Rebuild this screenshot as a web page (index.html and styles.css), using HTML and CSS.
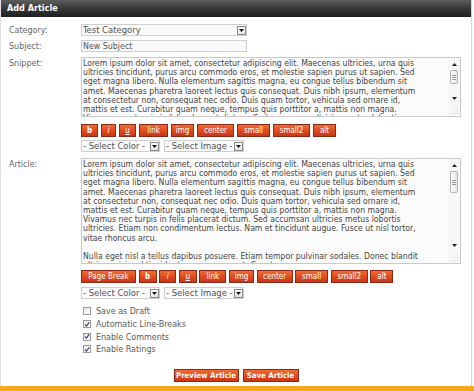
FILE: index.html
```html
<!DOCTYPE html>
<html>
<head>
<meta charset="utf-8">
<title>Add Article</title>
<link rel="stylesheet" href="styles.css">
</head>
<body>
<div class="panel">
  <div class="head">Add Article</div>
  <form class="form">
    <div class="row r-cat">
      <label class="lbl">Category:</label>
      <span class="sel sel-wide"><select><option>Test Category</option></select><span class="arrow"><svg width="5" height="3" viewBox="0 0 5 3"><path d="M0 0H5L2.5 3Z" fill="#111"/></svg></span></span>
    </div>
    <div class="row r-subj">
      <label class="lbl">Subject:</label>
      <input class="txt" type="text" value="New Subject">
    </div>
    <div class="row r-snip">
      <label class="lbl lbl-top">Snippet:</label>
      <div class="tbox tbox-snip">
        <textarea class="ta">Lorem ipsum dolor sit amet, consectetur adipiscing elit. Maecenas ultricies, urna quis
ultricies tincidunt, purus arcu commodo eros, et molestie sapien purus ut sapien. Sed
eget magna libero. Nulla elementum sagittis magna, eu congue tellus bibendum sit
amet. Maecenas pharetra laoreet lectus quis consequat. Duis nibh ipsum, elementum
at consectetur non, consequat nec odio. Duis quam tortor, vehicula sed ornare id,
mattis et est. Curabitur quam neque, tempus quis porttitor a, mattis non magna.
Vivamus nec turpis in felis placerat dictum. Sed accumsan ultricies metus lobortis</textarea>
        <div class="sb">
          <span class="sb-btn"><svg width="5" height="3" viewBox="0 0 5 3"><path d="M2.5 0L5 3H0Z" fill="#222"/></svg></span>
          <span class="sb-thumb thumb-snip"><i></i><i></i><i></i></span>
          <span class="sb-track"></span>
          <span class="sb-btn"><svg width="5" height="3" viewBox="0 0 5 3"><path d="M0 0H5L2.5 3Z" fill="#222"/></svg></span>
          <span class="sb-corner"><svg width="8" height="8" viewBox="0 0 8 8"><g fill="#c4c4c4"><rect x="6" y="0" width="1" height="1"/><rect x="6" y="3" width="1" height="1"/><rect x="3" y="3" width="1" height="1"/><rect x="6" y="6" width="1" height="1"/><rect x="3" y="6" width="1" height="1"/><rect x="0" y="6" width="1" height="1"/></g></svg></span>
        </div>
      </div>
    </div>
    <div class="row r-btn1 indent">
      <button type="button" class="btn w17 bb">b</button>
      <button type="button" class="btn w15 bi">i</button>
      <button type="button" class="btn w17 bu">u</button>
      <button type="button" class="btn w29">link</button>
      <button type="button" class="btn w23">img</button>
      <button type="button" class="btn w37">center</button>
      <button type="button" class="btn w33">small</button>
      <button type="button" class="btn w37">small2</button>
      <button type="button" class="btn w23">alt</button>
    </div>
    <div class="row r-sel1 indent">
      <span class="sel sel-color"><select><option>- Select Color -</option></select><span class="arrow"><svg width="5" height="3" viewBox="0 0 5 3"><path d="M0 0H5L2.5 3Z" fill="#111"/></svg></span></span>
      <span class="sel sel-img"><select><option>- Select Image -</option></select><span class="arrow"><svg width="5" height="3" viewBox="0 0 5 3"><path d="M0 0H5L2.5 3Z" fill="#111"/></svg></span></span>
    </div>
    <div class="row r-art">
      <label class="lbl lbl-top">Article:</label>
      <div class="tbox tbox-art">
        <textarea class="ta">Lorem ipsum dolor sit amet, consectetur adipiscing elit. Maecenas ultricies, urna quis
ultricies tincidunt, purus arcu commodo eros, et molestie sapien purus ut sapien. Sed
eget magna libero. Nulla elementum sagittis magna, eu congue tellus bibendum sit
amet. Maecenas pharetra laoreet lectus quis consequat. Duis nibh ipsum, elementum
at consectetur non, consequat nec odio. Duis quam tortor, vehicula sed ornare id,
mattis et est. Curabitur quam neque, tempus quis porttitor a, mattis non magna.
Vivamus nec turpis in felis placerat dictum. Sed accumsan ultricies metus lobortis
ultricies. Etiam non condimentum lectus. Nam et tincidunt augue. Fusce ut nisl tortor,
vitae rhoncus arcu.

Nulla eget nisl a tellus dapibus posuere. Etiam tempor pulvinar sodales. Donec blandit
ultrices nisi, vel tincidunt nunc posuere ut. Cras tempus.</textarea>
        <div class="sb">
          <span class="sb-btn"><svg width="5" height="3" viewBox="0 0 5 3"><path d="M2.5 0L5 3H0Z" fill="#222"/></svg></span>
          <span class="sb-thumb thumb-art"><i></i><i></i><i></i></span>
          <span class="sb-track"></span>
          <span class="sb-btn"><svg width="5" height="3" viewBox="0 0 5 3"><path d="M0 0H5L2.5 3Z" fill="#222"/></svg></span>
          <span class="sb-corner"><svg width="8" height="8" viewBox="0 0 8 8"><g fill="#c4c4c4"><rect x="6" y="0" width="1" height="1"/><rect x="6" y="3" width="1" height="1"/><rect x="3" y="3" width="1" height="1"/><rect x="6" y="6" width="1" height="1"/><rect x="3" y="6" width="1" height="1"/><rect x="0" y="6" width="1" height="1"/></g></svg></span>
        </div>
      </div>
    </div>
    <div class="row r-btn2 indent">
      <button type="button" class="btn w55">Page Break</button>
      <button type="button" class="btn w18 bb">b</button>
      <button type="button" class="btn w17 bi">i</button>
      <button type="button" class="btn w18 bu">u</button>
      <button type="button" class="btn w27">link</button>
      <button type="button" class="btn w25">img</button>
      <button type="button" class="btn w36">center</button>
      <button type="button" class="btn w33">small</button>
      <button type="button" class="btn w37">small2</button>
      <button type="button" class="btn w23">alt</button>
    </div>
    <div class="row r-sel2 indent">
      <span class="sel sel-color"><select><option>- Select Color -</option></select><span class="arrow"><svg width="5" height="3" viewBox="0 0 5 3"><path d="M0 0H5L2.5 3Z" fill="#111"/></svg></span></span>
      <span class="sel sel-img"><select><option>- Select Image -</option></select><span class="arrow"><svg width="5" height="3" viewBox="0 0 5 3"><path d="M0 0H5L2.5 3Z" fill="#111"/></svg></span></span>
    </div>
    <div class="checks indent">
      <label class="chk"><span class="box"></span>Save as Draft</label>
      <label class="chk"><span class="box"><svg width="7" height="7" viewBox="0 0 7 7"><path d="M1 3.5L2.8 5.5L6 1" fill="none" stroke="#27306b" stroke-width="1.3"/></svg></span>Automatic Line-Breaks</label>
      <label class="chk"><span class="box"><svg width="7" height="7" viewBox="0 0 7 7"><path d="M1 3.5L2.8 5.5L6 1" fill="none" stroke="#27306b" stroke-width="1.3"/></svg></span>Enable Comments</label>
      <label class="chk"><span class="box"><svg width="7" height="7" viewBox="0 0 7 7"><path d="M1 3.5L2.8 5.5L6 1" fill="none" stroke="#27306b" stroke-width="1.3"/></svg></span>Enable Ratings</label>
    </div>
    <div class="submit">
      <button type="button" class="btn big b-prev">Preview Article</button>
      <button type="button" class="btn big b-save">Save Article</button>
    </div>
  </form>
</div>
<div class="bottom-bar"></div>
</body>
</html>
```

FILE: styles.css
```css
html, body {
  margin: 0;
  padding: 0;
  background: #ffffff;
}
body {
  width: 474px;
  height: 391px;
  overflow: hidden;
  font-family: "DejaVu Sans Condensed", "DejaVu Sans", sans-serif;
  font-size: 8.8px;
  color: #666666;
}
.panel {
  width: 470px;
  height: 386px;
  border-left: 1px solid #e2e2e2;
  border-right: 1px solid #d6d6d6;
  background: #ffffff;
}
.head {
  height: 17px;
  line-height: 17px;
  padding-left: 6px;
  background: linear-gradient(#5e5e5e, #343434 55%, #1f1f1f);
  color: #ffffff;
  font-weight: bold;
  font-size: 9px;
}
.form {
  padding: 0 0 0 8px;
  margin: 0;
}
.row {
  display: flex;
  align-items: center;
}
.indent {
  margin-left: 72px;
}
.lbl {
  width: 72px;
  flex: none;
  color: #666666;
  font-size: 8.9px;
  line-height: 12px;
}
.lbl-top {
  align-self: flex-start;
  padding-top: 1px;
  line-height: 9.2px;
  margin-top: 1px;
}
.r-cat { margin-top: 7px; height: 12px; }
.r-subj { margin-top: 4px; height: 12px; }
.r-snip { margin-top: 5px; align-items: flex-start; }
.r-btn1 { margin-top: 7px; gap: 3px; }
.r-sel1 { margin-top: 3px; gap: 4px; }
.r-art { margin-top: 6px; align-items: flex-start; }
.r-btn2 { margin-top: 6px; gap: 2.6px; }
.r-sel2 { margin-top: 4px; gap: 4px; }

.sel {
  display: inline-flex;
  align-items: center;
  height: 12px;
  box-sizing: border-box;
  border: 1px solid #cfcfcf;
  background: #fafafa;
}
.sel select {
  appearance: none;
  -webkit-appearance: none;
  border: 0;
  outline: 0;
  background: transparent;
  font-family: "DejaVu Sans Condensed", "DejaVu Sans", sans-serif;
  font-size: 9.4px;
  color: #555555;
  padding: 0 0 0 1px;
  margin: 0;
  height: 10px;
  line-height: 10px;
  flex: 1;
  min-width: 0;
}
.arrow {
  width: 9px;
  height: 9px;
  flex: none;
  box-sizing: border-box;
  border: 1px solid #8a8a8a;
  background: linear-gradient(#ffffff, #e4e4e4);
  display: flex;
  align-items: center;
  justify-content: center;
}
.sel-wide { width: 166px; }
.sel-color { width: 79px; }
.sel-img { width: 80px; }

.txt {
  width: 166px;
  height: 12px;
  box-sizing: border-box;
  border: 1px solid #cfcfcf;
  background: #fafafa;
  font-family: "DejaVu Sans Condensed", "DejaVu Sans", sans-serif;
  font-size: 8.8px;
  color: #555555;
  padding: 0 1px;
  margin: 0;
  outline: 0;
}

.tbox {
  display: flex;
  width: 380px;
  box-sizing: border-box;
  border: 1px solid #cacaca;
  background: #fbfbfb;
}
.tbox-snip { height: 60px; }
.tbox-art { height: 106px; }
.ta {
  flex: 1;
  border: 0;
  outline: 0;
  resize: none;
  overflow: hidden;
  white-space: pre;
  background: transparent;
  font-family: "DejaVu Sans Condensed", "DejaVu Sans", sans-serif;
  font-size: 8.6px;
  line-height: 9.2px;
  color: #454545;
  padding: 1px 0 0 1px;
  margin: 0;
}
.sb {
  width: 12px;
  flex: none;
  display: flex;
  flex-direction: column;
  background: #f7f7f7;
}
.sb-btn {
  height: 12px;
  flex: none;
  display: flex;
  align-items: center;
  justify-content: center;
}
.sb-thumb {
  flex: none;
  margin: 0 2px;
  box-sizing: border-box;
  border: 1px solid #b2b2b2;
  border-radius: 2px;
  background: linear-gradient(90deg, #ffffff, #e6e6e6);
  display: flex;
  flex-direction: column;
  justify-content: center;
  align-items: center;
  gap: 1px;
}
.sb-thumb i {
  display: block;
  width: 4px;
  height: 1px;
  background: #9a9a9a;
}
.thumb-snip { height: 14px; }
.thumb-art { height: 22px; }
.sb-track { flex: 1; }
.sb-corner {
  height: 11px;
  flex: none;
  display: flex;
  align-items: flex-end;
  justify-content: flex-end;
  padding: 0 1px 1px 0;
}

.btn {
  height: 13px;
  box-sizing: border-box;
  margin: 0;
  padding: 0;
  border: 1px solid #8c2a15;
  background: linear-gradient(#f26a32, #df481f 55%, #c8361a);
  color: #ffffff;
  font-family: "DejaVu Sans Condensed", "DejaVu Sans", sans-serif;
  font-size: 8px;
  line-height: 11px;
  text-align: center;
  flex: none;
}
.bb { font-weight: bold; }
.bi { font-style: italic; }
.bu { text-decoration: underline; }
.w15 { width: 15px; }
.w17 { width: 17px; }
.w18 { width: 18px; }
.w23 { width: 23px; }
.w25 { width: 25px; }
.w27 { width: 27px; }
.w29 { width: 29px; }
.w33 { width: 33px; }
.w36 { width: 36px; }
.w37 { width: 37px; }
.w55 { width: 55px; }

.checks {
  margin-top: 6px;
  padding-left: 2px;
  display: flex;
  flex-direction: column;
}
.chk {
  display: flex;
  align-items: center;
  gap: 5px;
  height: 12.7px;
  font-size: 8.9px;
  color: #5a5a5a;
}
.box {
  width: 8px;
  height: 8px;
  flex: none;
  box-sizing: border-box;
  border: 1px solid #9c9c9c;
  background: linear-gradient(135deg, #e8e8e8, #ffffff);
  display: flex;
  align-items: center;
  justify-content: center;
}
.submit {
  display: flex;
  justify-content: center;
  gap: 4px;
  margin-top: 13px;
  margin-left: -8px;
}
.big {
  font-weight: bold;
  font-size: 7.8px;
}
.b-prev { width: 65px; }
.b-save { width: 56px; }

.bottom-bar {
  height: 5px;
  background: #f6a81e;
}
```
